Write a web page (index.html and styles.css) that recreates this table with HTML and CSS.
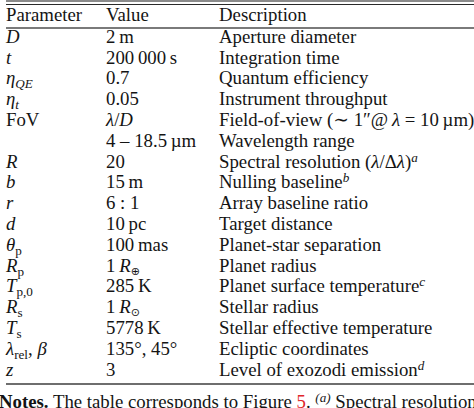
FILE: index.html
```html
<!DOCTYPE html>
<html>
<head>
<meta charset="utf-8">
<link rel="stylesheet" href="styles.css">
</head>
<body>
<div class="page">
  <div class="rule-top-thick"></div>
  <div class="rule-top-thin"></div>
  <div class="row head">
    <span>Parameter</span><span>Value</span><span>Description</span>
  </div>
  <div class="rule-head"></div>
  <div class="body">
    <div class="row"><span><i>D</i></span><span>2&#8201;m</span><span>Aperture diameter</span></div>
    <div class="row"><span><i>t</i></span><span>200&#8201;000&#8201;s</span><span>Integration time</span></div>
    <div class="row"><span><i>η</i><sub class="sub it">QE</sub></span><span>0.7</span><span>Quantum efficiency</span></div>
    <div class="row"><span><i>η</i><sub class="sub it">t</sub></span><span>0.05</span><span>Instrument throughput</span></div>
    <div class="row"><span>FoV</span><span><i>λ</i>/<i>D</i></span><span>Field-of-view (∼ 1″@&#8201;<i>λ</i> = 10&#8201;µm)</span></div>
    <div class="row"><span></span><span>4 – 18.5&#8201;µm</span><span>Wavelength range</span></div>
    <div class="row"><span><i>R</i></span><span>20</span><span>Spectral resolution (<i>λ</i>/Δ<i>λ</i>)<sup class="sup it">a</sup></span></div>
    <div class="row"><span><i>b</i></span><span>15&#8201;m</span><span>Nulling baseline<sup class="sup it">b</sup></span></div>
    <div class="row"><span><i>r</i></span><span>6 : 1</span><span>Array baseline ratio</span></div>
    <div class="row"><span><i>d</i></span><span>10&#8201;pc</span><span>Target distance</span></div>
    <div class="row"><span><i>θ</i><sub class="sub">p</sub></span><span>100&#8201;mas</span><span>Planet-star separation</span></div>
    <div class="row"><span><i>R</i><sub class="sub">p</sub></span><span>1&#8201;<i>R</i><sub class="sub sym">⊕</sub></span><span>Planet radius</span></div>
    <div class="row"><span><i>T</i><sub class="sub">p,0</sub></span><span>285&#8201;K</span><span>Planet surface temperature<sup class="sup it">c</sup></span></div>
    <div class="row"><span><i>R</i><sub class="sub">s</sub></span><span>1&#8201;<i>R</i><sub class="sub sym">⊙</sub></span><span>Stellar radius</span></div>
    <div class="row"><span><i>T</i><sub class="sub">s</sub></span><span>5778&#8201;K</span><span>Stellar effective temperature</span></div>
    <div class="row"><span><i>λ</i><sub class="sub">rel</sub>, <i>β</i></span><span>135°, 45°</span><span>Ecliptic coordinates</span></div>
    <div class="row"><span><i>z</i></span><span>3</span><span>Level of exozodi emission<sup class="sup it">d</sup></span></div>
  </div>
  <div class="rule-bottom"></div>
  <p class="notes"><b>Notes.</b> The table corresponds to Figure <span class="ref">5</span>. <sup class="sup it">(a)</sup> Spectral resolution is</p>
</div>
</body>
</html>
```

FILE: styles.css
```css
html, body {
  margin: 0;
  padding: 0;
  background: #ffffff;
  overflow: hidden;
}

.page {
  width: 474px;
  height: 408px;
  padding-left: 6px;
  box-sizing: border-box;
  overflow: hidden;
  font-family: "Liberation Serif", "DejaVu Serif", serif;
  font-size: 18.8px;
  line-height: 20.8px;
  color: #141414;
}

.rule-top-thick {
  height: 2.4px;
  background: #8a8a8a;
}

.rule-top-thin {
  height: 1px;
  margin-top: 1.2px;
  background: #2a2a2a;
}

.row {
  display: grid;
  grid-template-columns: 100px 113px auto;
  height: 20.8px;
  white-space: nowrap;
}

.rule-head {
  height: 2px;
  margin-top: 1.6px;
  background: #7a7a7a;
}

.body {
  margin-top: -2.2px;
}

.rule-bottom {
  height: 1.8px;
  margin-top: 2.8px;
  background: #6e6e6e;
}

.sub {
  font-size: 0.7em;
  line-height: 0;
  vertical-align: -0.3em;
}

.sup {
  font-size: 0.7em;
  line-height: 0;
  vertical-align: 0.45em;
}

.it {
  font-style: italic;
}

.sym {
  font-style: normal;
  font-family: "DejaVu Sans", sans-serif;
  font-size: 0.6em;
}

.notes {
  margin: 7.4px 0 0 -7px;
  white-space: nowrap;
}

.ref {
  color: #e0262a;
}
```
